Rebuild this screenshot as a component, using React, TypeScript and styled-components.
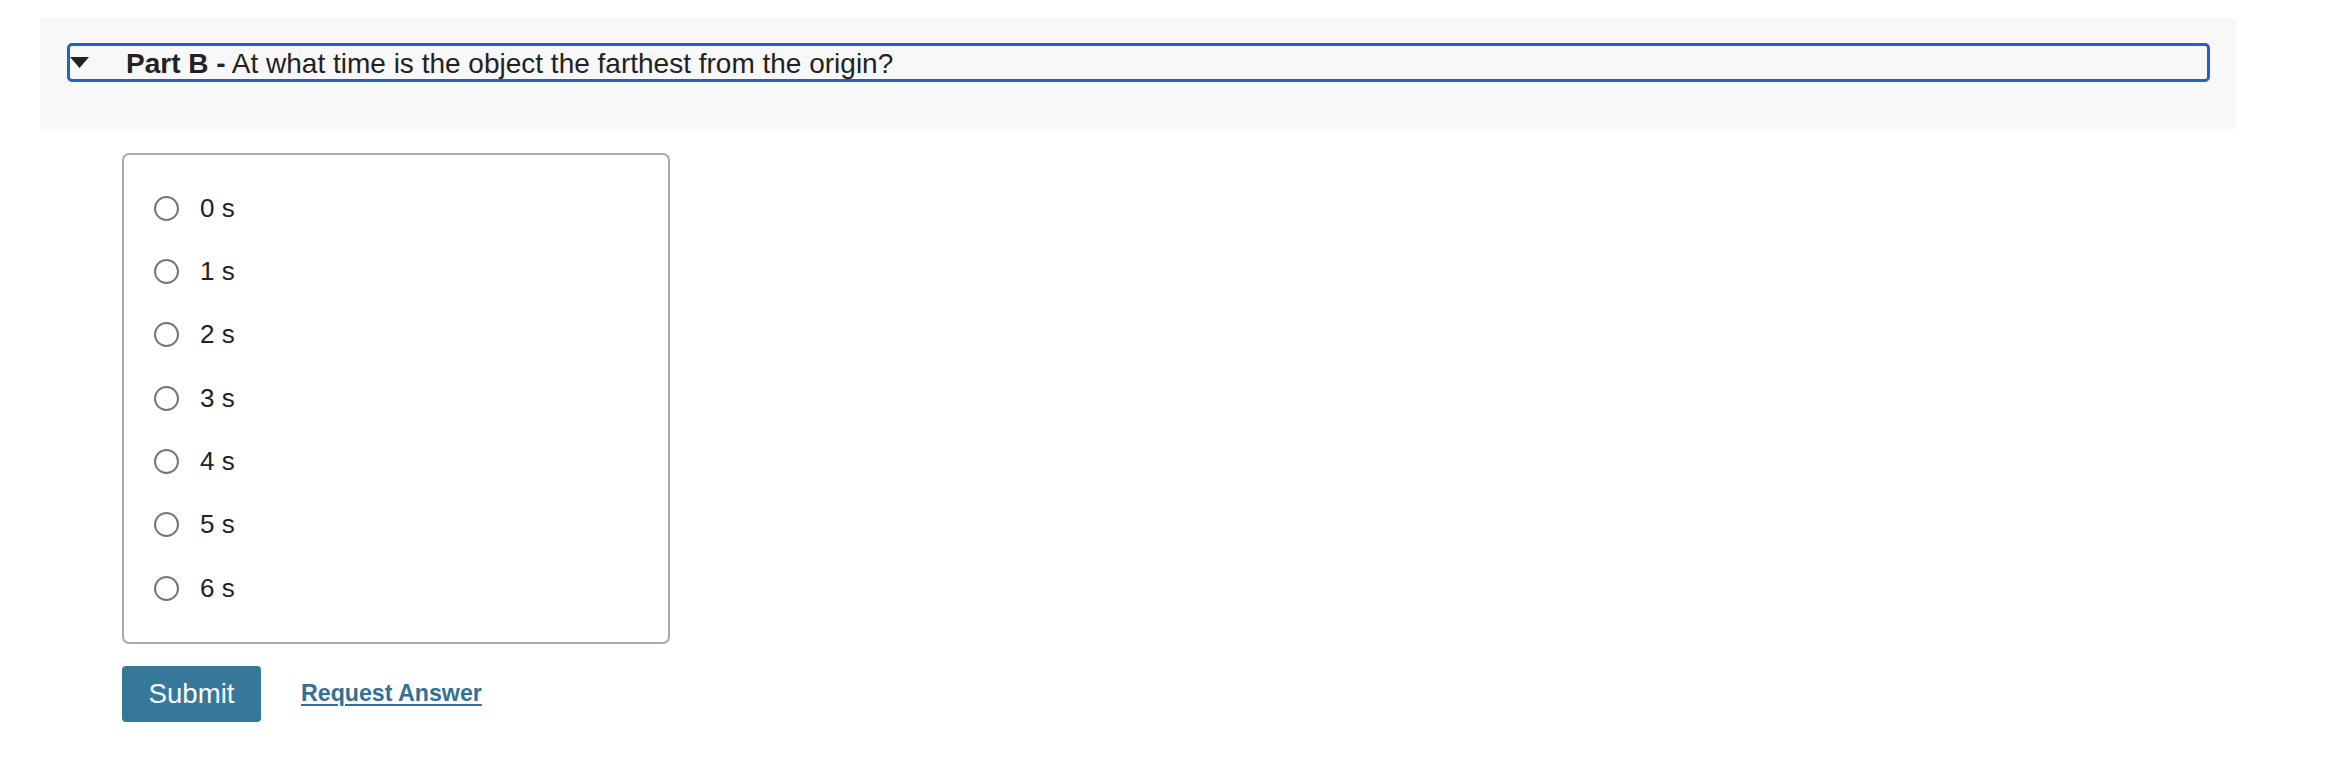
import styled, { createGlobalStyle } from 'styled-components';

const GlobalStyle = createGlobalStyle`
  html, body {
    margin: 0;
    padding: 0;
    background: #ffffff;
  }
  body {
    font-family: "Liberation Sans", Arial, Helvetica, sans-serif;
    color: #222222;
  }
`;

const Page = styled.div`
  padding: 18px 90px 0 40px;
`;

const PartPanel = styled.section`
  background: #f8f8f8;
  padding: 25px 26px 47px 26.5px;
`;

const PartHeader = styled.button`
  width: 100%;
  height: 39px;
  box-sizing: border-box;
  display: flex;
  align-items: center;
  gap: 37px;
  padding: 3px 0 0 0.5px;
  border: 3px solid #2a5ec6;
  border-radius: 5px;
  background: transparent;
  font-family: inherit;
  font-size: 28px;
  color: #222222;
  cursor: pointer;
  text-align: left;
`;

const Caret = styled.svg`
  flex: none;
  width: 19px;
  height: 11px;
  margin-top: -3px;
`;

const PartLabel = styled.span`
  font-weight: 700;
`;

const Body = styled.div`
  padding: 23.5px 0 0 82px;
`;

const ChoiceBox = styled.fieldset`
  margin: 0;
  width: 548px;
  box-sizing: border-box;
  padding: 22px 0 22px 30px;
  border: 2px solid #aaaaaa;
  border-radius: 7px;
`;

const Choice = styled.label`
  display: flex;
  align-items: center;
  height: 63.35px;
  font-size: 26px;
  color: #222222;
  cursor: pointer;
`;

const Radio = styled.input`
  appearance: none;
  margin: 0 21px 0 0;
  width: 25px;
  height: 25px;
  box-sizing: border-box;
  border: 2px solid #757575;
  border-radius: 50%;
  background: #ffffff;
  flex: none;
`;

const Actions = styled.div`
  display: flex;
  align-items: center;
  gap: 40px;
  margin-top: 22px;
`;

const SubmitButton = styled.button`
  width: 139px;
  height: 56px;
  border: none;
  border-radius: 4px;
  background: #367899;
  color: #ffffff;
  font-family: inherit;
  font-size: 27.6px;
  cursor: pointer;
`;

const RequestLink = styled.a`
  font-size: 23.2px;
  font-weight: 700;
  color: #2f7197;
  text-decoration: underline;
  text-decoration-thickness: 2px;
  text-underline-offset: 3px;
  cursor: pointer;
`;

const NextPanel = styled.div`
  margin-top: 52px;
  height: 20px;
  background: #f6f6f6;
`;

const choices = ['0 s', '1 s', '2 s', '3 s', '4 s', '5 s', '6 s'];

export default function App() {
  return (
    <>
      <GlobalStyle />
      <Page>
        <PartPanel>
          <PartHeader type="button" aria-expanded="true">
            <Caret viewBox="0 0 19 11">
              <polygon points="0,0 19,0 9.5,11" fill="#222222" />
            </Caret>
            <span>
              <PartLabel>Part B -</PartLabel> At what time is the object the farthest from the origin?
            </span>
          </PartHeader>
        </PartPanel>
        <Body>
          <ChoiceBox>
            {choices.map((c) => (
              <Choice key={c}>
                <Radio type="radio" name="partB" value={c} />
                {c}
              </Choice>
            ))}
          </ChoiceBox>
          <Actions>
            <SubmitButton type="button">Submit</SubmitButton>
            <RequestLink>Request Answer</RequestLink>
          </Actions>
        </Body>
        <NextPanel />
      </Page>
    </>
  );
}
